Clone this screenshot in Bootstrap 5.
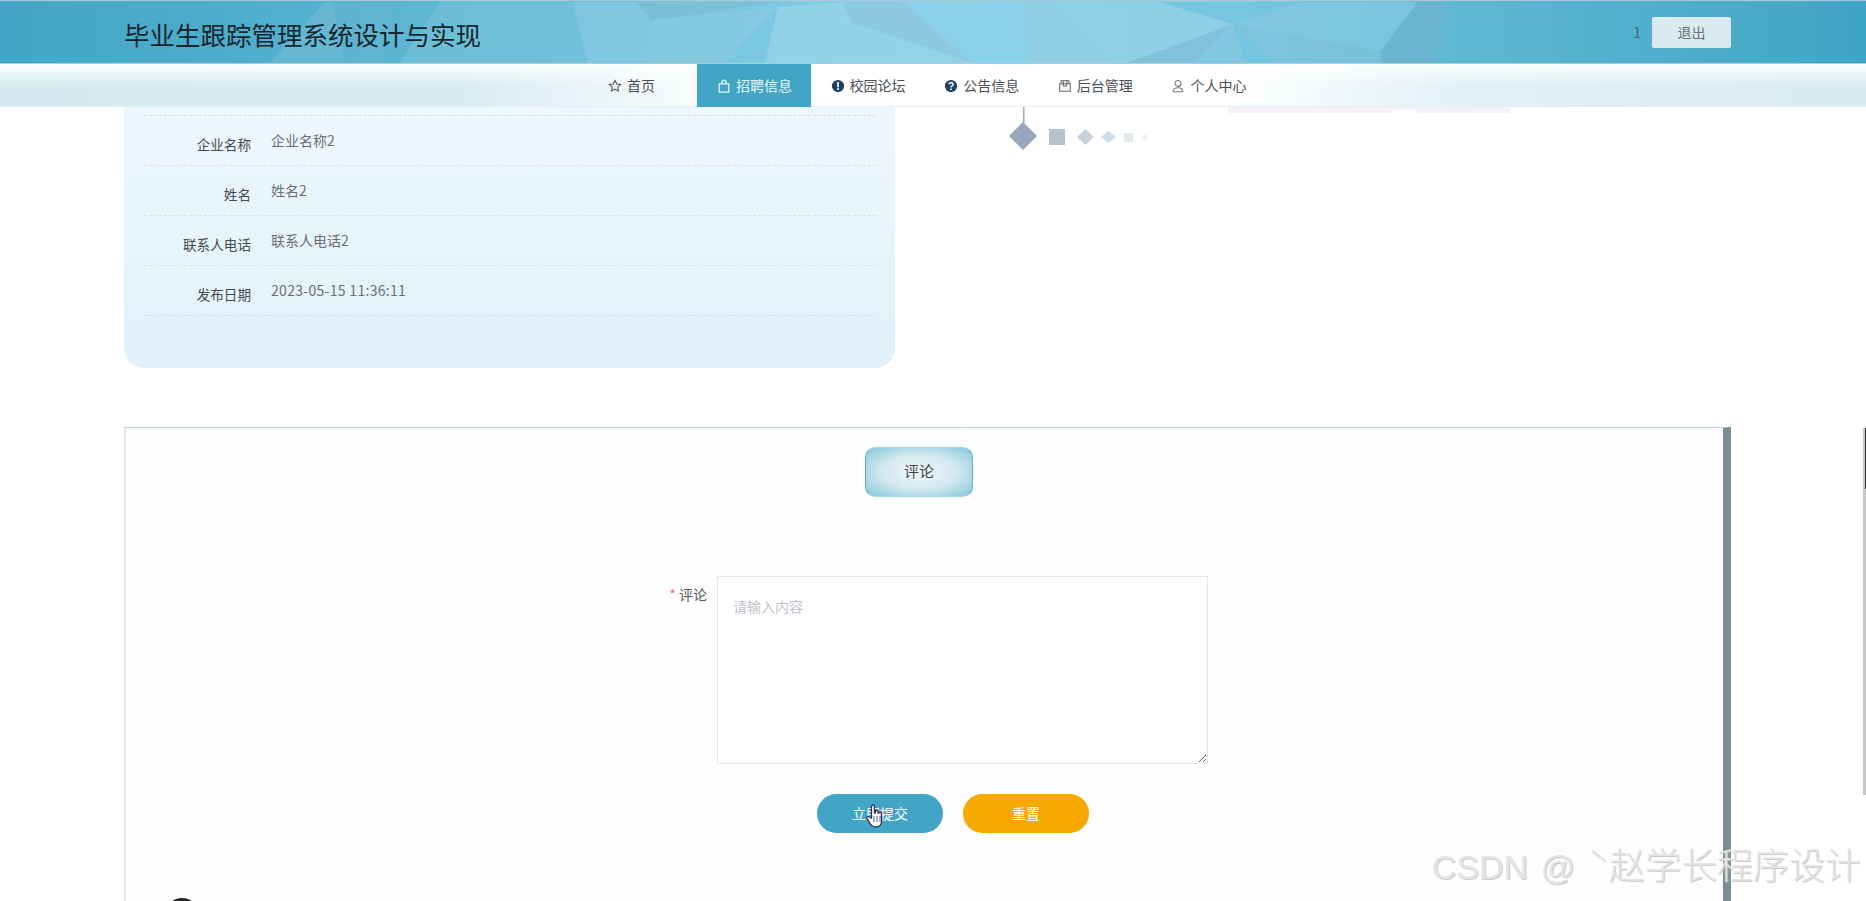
<!DOCTYPE html>
<html lang="zh-CN">
<head>
  <meta charset="UTF-8">
  <title>毕业生跟踪管理系统设计与实现</title>
  <link href="https://cdn.jsdelivr.net/npm/bootstrap@5.3.0/dist/css/bootstrap.min.css" rel="stylesheet" />
  <style>
    html, body { height: 901px; overflow: hidden; }
    body { font-family: "Noto Sans CJK SC", "Liberation Sans", sans-serif; font-size: 14px; background: #fff; color: #555; }

    .top-band { height: 64px; border-top: 1px solid #a9c9d6; border-bottom: 1px solid #9fd3e3; background: #42a6c6; padding-left: 124px; padding-right: 135px; }
    .band-art { position: absolute; left: 0; top: 0; width: 100%; height: 100%; }
    .band-title { position: relative; font-size: 25.5px; line-height: 1; color: #15262e; margin: 0 0 -4px; font-weight: 400; }
    .band-user { position: relative; color: #4f6570; margin-right: 11px; }
    .logout-btn { position: relative; width: 79px; height: 31px; padding: 0; font-size: 14px; background: #d9ebf1; color: #6a6f72; border: 0; border-radius: 2px; }

    .menu-band { height: 43px; padding-right: 13px; border-bottom: 1px solid #e3eef2;
      background: linear-gradient(180deg, rgba(255,255,255,.9) 0, rgba(255,255,255,0) 50%),
                  linear-gradient(90deg, #d5eaf0 0, #d9ecf1 25%, #f0f8fa 34%, #fff 40%, #fff 66%, #e2f1f5 78%, #d8ebf0 100%); }
    .menu-band .nav-link { display: flex; align-items: center; gap: 5px; height: 43px; width: 113.6px; padding: 0 0 0 20px; color: #4a4f55; font-size: 14px; white-space: nowrap; }
    .menu-band .nav-item:first-child .nav-link { width: 109px; }
    .menu-band .nav-link.active { background: #41a6c6; color: #e6f6fa; }
    .menu-band svg { width: 14px; height: 14px; flex: none; }

    .page-main { padding-top: 107px; }
    .upper-row { margin-left: 124px; }
    .info-panel { width: 771px; height: 261px; padding: 8px 19px 0 20px; border: 0; border-radius: 0 0 20px 20px; background: linear-gradient(180deg, #edf7ff 0, #e1f1f9 100%); }
    .info-line { height: 50px; border-top: 1px dashed #d5dfe5; }
    .info-line:last-child { height: 51px; border-bottom: 1px dashed #d5dfe5; }
    .info-key { width: 107px; margin-right: 20px; padding-top: 8px; text-align: right; font-size: 13.6px; color: #454a4e; }
    .info-val { color: #6b7074; }
    .date-val { letter-spacing: .3px; }
    .slider-art { margin-left: 114px; width: 140px; height: 43px; flex: none; }
    .pink-strip { margin-left: 79px; width: 282px; height: 6px; background: linear-gradient(#f6f1f8 50%, transparent 50%), linear-gradient(90deg, #f6f1f8 165px, transparent 165px, transparent 189px, #f6f1f8 189px); }

    .comment-box { margin: 59px 0 0 124px; width: 1607px; height: 474px; overflow: hidden; background: #fefefe; border-top: 1px solid #bcd9d8; border-left: 2px solid #d8e8e8; border-right: 8px solid #7b8e93; }
    .comment-head { padding: 19px 11px 0 0; }
    .comment-tag { width: 108px; height: 50px; padding-bottom: 2px; font-size: 15px; border-radius: 10px; border: 1px solid #a8d8e4; border-left-color: #5fb0c5; border-right-color: #5fb0c5; color: #444; background: radial-gradient(ellipse at center, #eef6f9 0, #d3e9f0 50%, #82c7dc 100%); }
    .comment-form { margin: 79px 0 0 501px; }
    .field-key { width: 80px; margin-right: 10px; padding-top: 8px; text-align: right; color: #5a5a5a; }
    .field-key span { color: #e8707a; }
    .field-input { width: 491px; height: 188px; padding: 19px 15px; font-size: 14px; border: 1px solid #e4e6e8; border-radius: 0; color: #555; }
    .field-input::placeholder { color: #c0c4cc; }
    .form-actions { margin: 30px 0 0 190px; gap: 20px; }
    .act-btn { width: 126px; height: 39px; padding: 0; font-size: 14px; color: #fff; border: 0; }
    .act-submit { background: #41a6c6; }
    .act-reset { background: #f8a900; }
    .act-btn:hover { color: #fff; }
    .hand-cursor { position: absolute; left: 49px; top: 10px; width: 18px; height: 24px; }
    .avatar-dot { width: 34px; height: 34px; margin: 65px 0 0 39px; border-radius: 50%; background: #2a2628; }

    .csdn-mark { position: absolute; right: 5px; top: 839px; line-height: 48px; white-space: nowrap; font-family: "Liberation Sans", "Noto Sans CJK SC", sans-serif; font-size: 34px; font-weight: 300; word-spacing: 3px; color: #e4e4e4; text-shadow: 1px 1px 1px #c4c4c4; }
    .csdn-mark span { font-family: "Noto Sans CJK SC", sans-serif; font-size: 36px; }
    .bar-track { position: absolute; right: 0; top: 428px; width: 3px; height: 367px; background: #c6c6c6; }
    .bar-thumb { position: absolute; right: 0; top: 428px; width: 1.5px; height: 61px; background: #333; }
  </style>
</head>
<body>

  <!-- Header -->
  <div class="fixed-top">
    <div class="top-band position-relative d-flex align-items-center">
      <svg class="band-art" viewBox="0 0 1866 64" preserveAspectRatio="none">
        <defs>
          <linearGradient id="bandGrad">
            <stop offset="0" stop-color="#42a6c6"/>
            <stop offset=".14" stop-color="#4fafcc"/>
            <stop offset=".3" stop-color="#69bdd8"/>
            <stop offset=".5" stop-color="#8bd1e8"/>
            <stop offset=".66" stop-color="#86cbe2"/>
            <stop offset=".78" stop-color="#5fb8d3"/>
            <stop offset="1" stop-color="#3fa5c5"/>
          </linearGradient>
        </defs>
        <rect width="1866" height="64" fill="url(#bandGrad)"/>
        <g opacity=".75">
          <polygon points="270,64 325,1 333,1 345,64" fill="#6cbad4"/>
          <polygon points="345,64 333,1 395,1 380,64" fill="#62b4cf"/>
          <polygon points="400,64 440,1 575,1 587,64" fill="#74c1da"/>
          <polygon points="573,1 635,1 652,19 640,64 587,64" fill="#86cbe2"/>
          <polygon points="635,1 780,1 652,19" fill="#7fbfd5"/>
          <polygon points="652,19 778,6 725,64 640,64" fill="#89cbe0"/>
          <polygon points="778,6 765,64 725,64" fill="#7bc8e2"/>
          <polygon points="778,6 843,1 852,22 815,64 765,64" fill="#98d5e9"/>
          <polygon points="843,1 905,1 972,64 852,22" fill="#8fc8dc"/>
          <polygon points="852,22 972,64 815,64" fill="#95d4e8"/>
          <polygon points="905,1 1022,1 1030,64 972,64" fill="#8bd3ea"/>
          <polygon points="1022,1 1050,1 1110,64 1030,64" fill="#93d0e3"/>
          <polygon points="1050,1 1160,1 1233,24 1127,64 1110,64" fill="#90d1e6"/>
          <polygon points="1160,1 1300,1 1233,24" fill="#70c5e0"/>
          <polygon points="1233,24 1195,64 1127,64" fill="#7dbfd6"/>
          <polygon points="1233,24 1245,64 1195,64" fill="#80c7df"/>
          <polygon points="1233,24 1275,64 1245,64" fill="#6fc4df"/>
          <polygon points="1233,24 1380,52 1382,64 1275,64" fill="#7cc2da"/>
          <polygon points="1233,24 1300,1 1418,1 1380,52" fill="#80c8e0"/>
          <polygon points="1418,1 1445,1 1435,64 1382,64 1380,52" fill="#6cb3cc"/>
        </g>
      </svg>
      <h1 class="band-title me-auto">毕业生跟踪管理系统设计与实现</h1>
      <span class="band-user">1</span>
      <button class="btn logout-btn" type="button">退出</button>
    </div>

    <ul class="nav menu-band justify-content-center">
      <li class="nav-item">
        <a class="nav-link" href="#">
          <svg viewBox="0 0 16 16" fill="none" stroke="#555" stroke-width="1.2"><path d="M8 1.6l1.95 4.1 4.5.55-3.3 3.1.85 4.45L8 11.6l-4 2.2.85-4.45-3.3-3.1 4.5-.55z"/></svg>
          首页</a>
      </li>
      <li class="nav-item">
        <a class="nav-link active" href="#">
          <svg viewBox="0 0 16 16" fill="none" stroke="#e6f6fa" stroke-width="1.5"><path d="M2.5 5.5h11V15h-11z"/><path d="M5.5 5.500c0-5.500 5-5.500 5 0"/></svg>
          招聘信息</a>
      </li>
      <li class="nav-item">
        <a class="nav-link" href="#">
          <svg viewBox="0 0 16 16"><circle cx="8" cy="8" r="7" fill="#1e3f66"/><rect x="7" y="3.5" width="2" height="6" fill="#fff"/><rect x="7" y="10.5" width="2" height="2" fill="#fff"/></svg>
          校园论坛</a>
      </li>
      <li class="nav-item">
        <a class="nav-link" href="#">
          <svg viewBox="0 0 16 16"><circle cx="8" cy="8" r="7" fill="#1e3f66"/><path d="M5.7 6.2C5.900 3.500 10.400 3.600 10.400 6.200c0 1.700-2.400 1.700-2.400 3.400" fill="none" stroke="#fff" stroke-width="1.6"/><rect x="7.1" y="10.8" width="1.8" height="1.8" fill="#fff"/></svg>
          公告信息</a>
      </li>
      <li class="nav-item">
        <a class="nav-link" href="#">
          <svg viewBox="0 0 16 16" fill="none" stroke="#666" stroke-width="1.2"><path d="M2 5.5h12V14H2z"/><path d="M3.500 5.500V2h9v3.500"/><path d="M6 2v6h4V2"/></svg>
          后台管理</a>
      </li>
      <li class="nav-item">
        <a class="nav-link" href="#">
          <svg viewBox="0 0 16 16" fill="none" stroke="#777" stroke-width="1.2"><circle cx="8" cy="5" r="3.4"/><path d="M2.500 14.500c0-6 11-6 11 0z"/></svg>
          个人中心</a>
      </li>
    </ul>
  </div>

  <div class="page-main">
    <div class="upper-row d-flex align-items-start">
      <div class="card info-panel">
        <div class="info-line d-flex align-items-center"><div class="info-key">企业名称</div><div class="info-val">企业名称2</div></div>
        <div class="info-line d-flex align-items-center"><div class="info-key">姓名</div><div class="info-val">姓名2</div></div>
        <div class="info-line d-flex align-items-center"><div class="info-key">联系人电话</div><div class="info-val">联系人电话2</div></div>
        <div class="info-line d-flex align-items-center"><div class="info-key">发布日期</div><div class="info-val date-val">2023-05-15 11:36:11</div></div>
      </div>
      <svg class="slider-art" viewBox="0 0 140 43">
        <rect x="14" y="0" width="1.5" height="16" fill="#9aa9bb"/>
        <polygon points="14,15 28,29 14,43 0,29" fill="#98a8bc"/>
        <rect x="40" y="22" width="16" height="16" fill="#b4c2cd"/>
        <polygon points="76.5,22 85,30 76.5,38 68,30" fill="#c8d2dc"/>
        <polygon points="99.5,24 107,30 99.5,36 92,30" fill="#d3dde5"/>
        <rect x="115" y="26" width="9" height="9" fill="#e3eaee"/>
        <polygon points="135.5,27 139,30.5 135.5,34 132,30.5" fill="#eaf0f2"/>
      </svg>
      <div class="pink-strip"></div>
    </div>

    <div class="comment-box">
      <div class="comment-head d-flex justify-content-center">
        <div class="comment-tag d-flex align-items-center justify-content-center">评论</div>
      </div>
      <form class="comment-form">
        <div class="d-flex align-items-start">
          <label class="field-key"><span>*</span> 评论</label>
          <textarea class="form-control field-input" placeholder="请输入内容"></textarea>
        </div>
        <div class="form-actions d-flex">
          <button class="btn rounded-pill act-btn act-submit position-relative" type="button">立即提交
            <svg class="hand-cursor" viewBox="0 0 18 24"><path d="M5.5 14V2.500c0-2 3-2 3 0V9l1-.2V7c0-1 2.200-1 2.500 0v2l1-.1c.5-.9 2.200-.7 2.400.4V11l.3 6c0 3-2 6-5.500 6-3.500 0-5-1-6.500-4L1 14.500c-.8-1.500 1.200-2.800 2.300-1.500z" fill="#fff" stroke="#2a2f52" stroke-width="1.3"/><path d="M8 12v6M11 12v6M14 12v6" stroke="#2a2f52" stroke-width=".8"/></svg>
          </button>
          <button class="btn rounded-pill act-btn act-reset" type="button">重置</button>
        </div>
      </form>
      <div class="avatar-dot"></div>
    </div>
  </div>

  <div class="csdn-mark">CSDN @ <span>ˋ赵学长程序设计</span></div>
  <div class="bar-track"></div>
  <div class="bar-thumb"></div>

  <script src="https://cdn.jsdelivr.net/npm/bootstrap@5.3.0/dist/js/bootstrap.bundle.min.js"></script>
</body>
</html>
